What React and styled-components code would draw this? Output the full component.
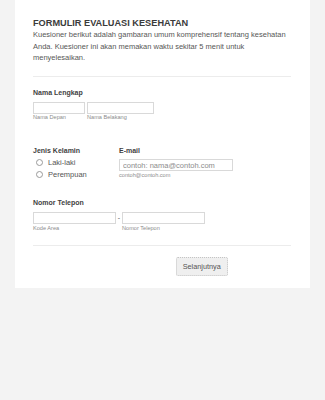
import React from "react";
import styled, { createGlobalStyle } from "styled-components";

const Global = createGlobalStyle`
  html, body { margin: 0; padding: 0; background: #f3f3f3; }
  body { font-family: "Liberation Sans", Arial, sans-serif; -webkit-font-smoothing: antialiased; }
  * { box-sizing: border-box; }
`;

const Page = styled.div`
  width: 325px;
  min-height: 400px;
  background: #f3f3f3;
`;

const Card = styled.form`
  margin: 0 15px;
  background: #ffffff;
  padding: 18px 19px 12px 18px;
  display: flex;
  flex-direction: column;
`;

const Header = styled.div`
  padding-bottom: 12.5px;
  border-bottom: 1px solid #ececec;
`;

const Title = styled.h1`
  margin: 0;
  font-size: 9.2px;
  line-height: 11px;
  font-weight: bold;
  color: #3b3b3b;
`;

const Desc = styled.p`
  margin: 0;
  font-size: 7.5px;
  line-height: 11.5px;
  color: #575757;
`;

const Section = styled.div`
  margin-top: ${(p) => p.$top}px;
`;

const Label = styled.div`
  font-size: 7px;
  line-height: 10px;
  font-weight: bold;
  color: #3f3f3f;
`;

const Row = styled.div`
  display: flex;
  align-items: flex-start;
`;

const Col = styled.div`
  width: ${(p) => (p.$w ? `${p.$w}px` : "auto")};
  display: flex;
  flex-direction: column;
`;

const Field = styled.div`
  display: flex;
  flex-direction: column;
  margin-right: ${(p) => p.$gap || 0}px;
`;

const Input = styled.input`
  width: ${(p) => p.$w}px;
  height: 12px;
  margin: ${(p) => p.$mt ?? 3.5}px 0 0;
  padding: 0 3px;
  border: 1px solid #d9d9d9;
  background: #fff;
  font-family: inherit;
  font-size: 7.5px;
  color: #555;
  outline: none;
  &::placeholder { color: #8c8c8c; }
`;

const Sub = styled.span`
  font-size: 5.6px;
  line-height: 7px;
  color: #8c8c8c;
  margin-top: 0.5px;
`;

const Dash = styled.span`
  width: 6px;
  margin-top: 5px;
  text-align: center;
  font-size: 7px;
  line-height: 10px;
  color: #555;
`;

const RadioRow = styled.label`
  display: flex;
  align-items: center;
  height: 12.6px;
  padding-left: 2.5px;
  font-size: 7.5px;
  color: #555;
`;

const Circle = styled.span`
  width: 7px;
  height: 7px;
  border-radius: 50%;
  border: 1px solid #9a9a9a;
  background: #fff;
  margin-right: 5.5px;
  flex-shrink: 0;
`;

const Divider = styled.div`
  margin-top: 13px;
  border-top: 1px solid #ececec;
`;

const Footer = styled.div`
  display: flex;
  padding-left: 142.5px;
  margin-top: 11.5px;
`;

const Button = styled.button`
  width: 52.5px;
  height: 18.5px;
  padding: 0;
  background: #efefef;
  border: 1px dotted #c4c4c4;
  border-radius: 2px;
  font-family: inherit;
  font-size: 7.3px;
  color: #555;
`;

export default function App() {
  return (
    <Page>
      <Global />
      <Card onSubmit={(e) => e.preventDefault()}>
        <Header>
          <Title>FORMULIR EVALUASI KESEHATAN</Title>
          <Desc>
            Kuesioner berikut adalah gambaran umum komprehensif tentang kesehatan Anda.
            Kuesioner ini akan memakan waktu sekitar 5 menit untuk menyelesaikan.
          </Desc>
        </Header>

        <Section $top={11}>
          <Label>Nama Lengkap</Label>
          <Row>
            <Field $gap={2}>
              <Input $w={52} />
              <Sub>Nama Depan</Sub>
            </Field>
            <Field>
              <Input $w={67} />
              <Sub>Nama Belakang</Sub>
            </Field>
          </Row>
        </Section>

        <Section $top={25}>
          <Row>
            <Col $w={86}>
              <Label>Jenis Kelamin</Label>
              <RadioRow><Circle />Laki-laki</RadioRow>
              <RadioRow><Circle />Perempuan</RadioRow>
            </Col>
            <Col>
              <Label>E-mail</Label>
              <Input $w={114} $mt={3} placeholder="contoh: nama@contoh.com" />
              <Sub>contoh@contoh.com</Sub>
            </Col>
          </Row>
        </Section>

        <Section $top={17}>
          <Label>Nomor Telepon</Label>
          <Row>
            <Field>
              <Input $w={83} $mt={4} />
              <Sub>Kode Area</Sub>
            </Field>
            <Dash>-</Dash>
            <Field>
              <Input $w={83} $mt={4} />
              <Sub>Nomor Telepon</Sub>
            </Field>
          </Row>
        </Section>

        <Divider />
        <Footer>
          <Button type="button">Selanjutnya</Button>
        </Footer>
      </Card>
    </Page>
  );
}
